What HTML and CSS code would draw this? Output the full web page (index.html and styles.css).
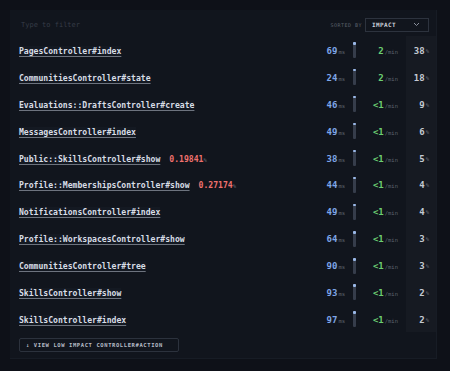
FILE: index.html
```html
<!DOCTYPE html>
<html>
<head>
<meta charset="utf-8">
<link rel="stylesheet" href="styles.css">
</head>
<body>
<div class="panel">
  <div class="head">
    <div class="filter">Type to filter</div>
    <div class="sort">
      <span class="sort-label">SORTED BY</span>
      <div class="select"><span>IMPACT</span>
        <svg class="chev" width="7" height="5" viewBox="0 0 7 5"><path d="M1 1 L3.5 3.5 L6 1" fill="none" stroke="#8a909c" stroke-width="1"/></svg>
      </div>
    </div>
  </div>
  <div class="table">
    <div class="row"><div class="name"><a>PagesController#index</a></div><div class="ms"><b>69</b><i>ms</i></div><div class="bar"><span style="height:3px"></span></div><div class="rpm"><b>2</b><i>/min</i></div><div class="pct"><b>38</b><i>%</i></div></div>
    <div class="row"><div class="name"><a>CommunitiesController#state</a></div><div class="ms"><b>24</b><i>ms</i></div><div class="bar"><span style="height:2px"></span></div><div class="rpm"><b>2</b><i>/min</i></div><div class="pct"><b>18</b><i>%</i></div></div>
    <div class="row"><div class="name"><a>Evaluations::DraftsController#create</a></div><div class="ms"><b>46</b><i>ms</i></div><div class="bar"><span style="height:2px"></span></div><div class="rpm"><b>&lt;1</b><i>/min</i></div><div class="pct"><b>9</b><i>%</i></div></div>
    <div class="row"><div class="name"><a>MessagesController#index</a></div><div class="ms"><b>49</b><i>ms</i></div><div class="bar"><span style="height:2px"></span></div><div class="rpm"><b>&lt;1</b><i>/min</i></div><div class="pct"><b>6</b><i>%</i></div></div>
    <div class="row"><div class="name"><a>Public::SkillsController#show</a><span class="slow">0.19841<i>%</i></span></div><div class="ms"><b>38</b><i>ms</i></div><div class="bar"><span style="height:2px"></span></div><div class="rpm"><b>&lt;1</b><i>/min</i></div><div class="pct"><b>5</b><i>%</i></div></div>
    <div class="row"><div class="name"><a>Profile::MembershipsController#show</a><span class="slow">0.27174<i>%</i></span></div><div class="ms"><b>44</b><i>ms</i></div><div class="bar"><span style="height:2px"></span></div><div class="rpm"><b>&lt;1</b><i>/min</i></div><div class="pct"><b>4</b><i>%</i></div></div>
    <div class="row"><div class="name"><a>NotificationsController#index</a></div><div class="ms"><b>49</b><i>ms</i></div><div class="bar"><span style="height:2px"></span></div><div class="rpm"><b>&lt;1</b><i>/min</i></div><div class="pct"><b>4</b><i>%</i></div></div>
    <div class="row"><div class="name"><a>Profile::WorkspacesController#show</a></div><div class="ms"><b>64</b><i>ms</i></div><div class="bar"><span style="height:3px"></span></div><div class="rpm"><b>&lt;1</b><i>/min</i></div><div class="pct"><b>3</b><i>%</i></div></div>
    <div class="row"><div class="name"><a>CommunitiesController#tree</a></div><div class="ms"><b>90</b><i>ms</i></div><div class="bar"><span style="height:3px"></span></div><div class="rpm"><b>&lt;1</b><i>/min</i></div><div class="pct"><b>3</b><i>%</i></div></div>
    <div class="row"><div class="name"><a>SkillsController#show</a></div><div class="ms"><b>93</b><i>ms</i></div><div class="bar"><span style="height:3px"></span></div><div class="rpm"><b>&lt;1</b><i>/min</i></div><div class="pct"><b>2</b><i>%</i></div></div>
    <div class="row"><div class="name"><a>SkillsController#index</a></div><div class="ms"><b>97</b><i>ms</i></div><div class="bar"><span style="height:3px"></span></div><div class="rpm"><b>&lt;1</b><i>/min</i></div><div class="pct"><b>2</b><i>%</i></div></div>
  </div>
  <div class="foot">
    <button class="more">↓ VIEW LOW IMPACT CONTROLLER#ACTION</button>
  </div>
</div>
</body>
</html>
```
FILE: styles.css
```css
html, body { margin: 0; padding: 0; }
body {
  background: #0e1118;
  width: 450px;
  height: 371px;
  overflow: hidden;
  font-family: "DejaVu Sans Mono", "Liberation Mono", monospace;
  color: #d5dbe4;
}
.panel {
  margin: 10px 0 0 10px;
  width: 427px;
  height: 349px;
  background: #11151d;
  border: 1px solid #171c25;
  border-width: 0 1px 1px 0;
  box-sizing: border-box;
  display: flex;
  flex-direction: column;
}
.head {
  height: 26px;
  flex-shrink: 0;
  display: flex;
  align-items: center;
  justify-content: space-between;
  padding: 3px 7px 0 11px;
  box-sizing: border-box;
}
.filter {
  font-size: 7px;
  color: #363c47;
}
.sort { display: flex; align-items: center; gap: 3px; }
.sort-label {
  font-size: 5px;
  letter-spacing: 0.5px;
  color: #5b616c;
}
.select {
  width: 64px;
  height: 14px;
  border: 1px solid #2d333e;
  box-sizing: border-box;
  display: flex;
  align-items: center;
  justify-content: space-between;
  padding: 0 8px 0 6px;
  font-size: 6px;
  font-weight: bold;
  letter-spacing: 0.4px;
  color: #c9cfd8;
}
.chev { display: block; }
.table { display: flex; flex-direction: column; flex-shrink: 0; }
.row {
  height: 26.9px;
  display: flex;
  align-items: center;
}
.name, .ms, .rpm { padding-top: 3px; }
.name {
  flex: 1;
  padding-left: 9px;
  display: flex;
  align-items: center;
  gap: 9px;
  font-size: 8.1px;
  font-weight: bold;
  white-space: nowrap;
}
.name a {
  color: #d8dde6;
  text-decoration: underline;
  text-decoration-color: #6d737e;
  text-underline-offset: 1.5px;
  background: #141922;
}
.slow {
  color: #f0716e;
  font-size: 8.1px;
}
.slow i, .ms i, .rpm i, .pct i {
  font-style: normal;
  font-weight: normal;
  font-size: 5.5px;
  color: #5d636e;
}
.ms {
  width: 49px;
  text-align: right;
  font-size: 9px;
  color: #7ea6e8;
}
.ms i { margin-left: 1px; }
.bar {
  width: 3px;
  height: 16px;
  margin-top: 2px;
  margin-left: 8px;
  background: #363d4b;
  border-radius: 1px;
  display: flex;
  flex-direction: column;
}
.bar span { display: block; background: #9ab8e8; border-radius: 1px; }
.rpm {
  width: 42px;
  text-align: right;
  font-size: 9px;
  color: #6ccf72;
}
.rpm i { margin-left: 1px; }
.pct {
  margin-left: 8px;
  width: 30px;
  height: 100%;
  background: #161a22;
  display: flex;
  align-items: center;
  justify-content: flex-end;
  padding: 3px 7px 0 0;
  box-sizing: border-box;
  font-size: 9px;
  color: #c4cad3;
}
.pct i { margin-left: 1px; }
.foot {
  padding: 6px 0 0 9px;
}
.more {
  display: block;
  background: transparent;
  border: 1px solid #2c323d;
  border-radius: 2px;
  height: 14px;
  width: 160px;
  padding: 0 0 0 6px;
  text-align: left;
  font-family: "DejaVu Sans Mono", "Liberation Mono", monospace;
  font-size: 5.5px;
  font-weight: bold;
  letter-spacing: 0.6px;
  color: #b6bcc6;
}
```
